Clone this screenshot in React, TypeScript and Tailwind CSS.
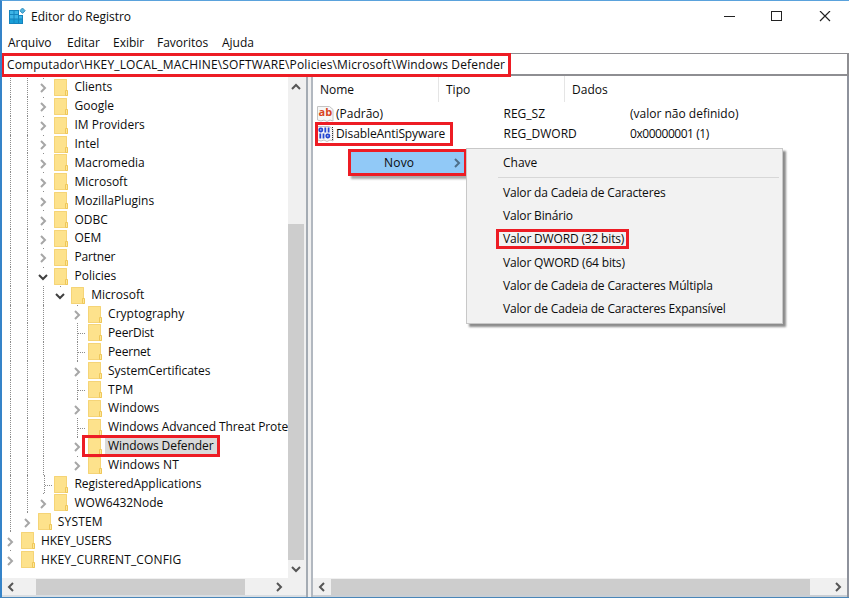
import { ReactNode } from 'react';

type TreeRow = {
  // one character per column: | guide, > collapsed, v expanded, L leaf, space empty
  guides: string;
  name: string;
  selected?: boolean;
  tracking?: string;
};

const rows: TreeRow[] = [
  { guides: '||>', name: 'Clients' },
  { guides: '||>', name: 'Google' },
  { guides: '||>', name: 'IM Providers' },
  { guides: '||>', name: 'Intel' },
  { guides: '||>', name: 'Macromedia' },
  { guides: '||>', name: 'Microsoft' },
  { guides: '||>', name: 'MozillaPlugins' },
  { guides: '||>', name: 'ODBC' },
  { guides: '||>', name: 'OEM' },
  { guides: '||>', name: 'Partner', tracking: 'tracking-[-0.2px]' },
  { guides: '||v', name: 'Policies' },
  { guides: '|||v', name: 'Microsoft' },
  { guides: '||| >', name: 'Cryptography' },
  { guides: '||| L', name: 'PeerDist', tracking: 'tracking-[-0.2px]' },
  { guides: '||| L', name: 'Peernet', tracking: 'tracking-[-0.2px]' },
  { guides: '||| >', name: 'SystemCertificates', tracking: 'tracking-[-0.05px]' },
  { guides: '||| L', name: 'TPM', tracking: 'tracking-[0.3px]' },
  { guides: '||| >', name: 'Windows' },
  { guides: '||| L', name: 'Windows Advanced Threat Protection', tracking: 'tracking-[-0.07px]' },
  { guides: '||| >', name: 'Windows Defender', selected: true, tracking: 'tracking-[-0.08px]' },
  { guides: '||| >', name: 'Windows NT', tracking: 'tracking-[0.1px]' },
  { guides: '||L', name: 'RegisteredApplications', tracking: 'tracking-[-0.04px]' },
  { guides: '||>', name: 'WOW6432Node', tracking: 'tracking-[-0.05px]' },
  { guides: '|>', name: 'SYSTEM', tracking: 'tracking-[0.2px]' },
  { guides: '>', name: 'HKEY_USERS' },
  { guides: '>', name: 'HKEY_CURRENT_CONFIG', tracking: 'tracking-[0.15px]' },
];

const menus = [
  { label: 'Arquivo', width: 'w-[59px]' },
  { label: 'Editar', width: 'w-[46px]' },
  { label: 'Exibir', width: 'w-[44px]' },
  { label: 'Favoritos', width: 'w-[65px]' },
  { label: 'Ajuda', width: 'w-[50px]' },
];

const newItems = [
  'Valor da Cadeia de Caracteres',
  'Valor Binário',
  'Valor DWORD (32 bits)',
  'Valor QWORD (64 bits)',
  'Valor de Cadeia de Caracteres Múltipla',
  'Valor de Cadeia de Caracteres Expansível',
];

function Chevron({ dir, className = 'text-[#555]' }: { dir: 'up' | 'down' | 'left' | 'right'; className?: string }) {
  const points = {
    up: '1,7 5,3 9,7',
    down: '1,3 5,7 9,3',
    left: '7,1 3,5 7,9',
    right: '3,1 7,5 3,9',
  };
  return (
    <svg viewBox="0 0 10 10" className={`h-[10px] w-[10px] shrink-0 ${className}`}>
      <polyline points={points[dir]} fill="none" stroke="currentColor" strokeWidth="2" />
    </svg>
  );
}

function Folder() {
  return (
    <svg viewBox="0 0 14 17" className="ml-[2.1px] h-[17px] w-[14px] shrink-0">
      <path d="M0 0h13v11l1 2v4H0z" fill="#fde28c" />
      <path d="M.5.5h12v11M.5.5v16h11" fill="none" stroke="#f5d477" />
      <path d="M11.500 16.500v-5h2v5z" fill="#fde79a" stroke="#efc759" />
    </svg>
  );
}

function Guide({ kind }: { kind: string }) {
  if (kind === ' ') return <span className="w-[16.8px] shrink-0" />;
  if (kind === '|') {
    return (
      <span className="flex w-[16.8px] shrink-0 justify-center self-stretch">
        <span className="w-px border-l border-dotted border-[#8c8c8c]" />
      </span>
    );
  }
  if (kind === 'L') {
    return (
      <span className="flex w-[16.8px] shrink-0 items-center self-stretch">
        <span className="ml-2 h-full border-l border-dotted border-[#8c8c8c]" />
        <span className="mt-[2px] w-[7px] border-t border-dotted border-[#8c8c8c]" />
      </span>
    );
  }
  return (
    <span className="flex w-[16.8px] shrink-0 flex-col items-center self-stretch">
      <span className="h-px w-px bg-[#8c8c8c]" />
      <span className="mr-px mt-[4.500px] flex">
        {kind === 'v' ? <Chevron dir="down" className="text-[#404040]" /> : <Chevron dir="right" className="text-[#a6a6a6]" />}
      </span>
    </span>
  );
}

function KeyRow({ row }: { row: TreeRow }) {
  return (
    <div className="flex h-[18.9px] items-center whitespace-nowrap">
      {row.guides.split('').map((kind, i) => (
        <Guide key={i} kind={kind} />
      ))}
      <Folder />
      <span className={`ml-[3px] pl-[3px] pr-1 leading-[18px] ${row.tracking ?? ''} ${row.selected ? 'bg-[#d9d9d9]' : ''}`}>{row.name}</span>
    </div>
  );
}

function HScroll({ children }: { children: ReactNode }) {
  return (
    <div className="flex h-[17px] shrink-0 items-center bg-[#f0f0f0]">
      {children}
    </div>
  );
}

function RegeditIcon() {
  return (
    <svg viewBox="0 0 17 17" className="h-[17px] w-[17px]">
      <path d="M0 2h10v5h4v9H0z" fill="#1583bd" />
      <path d="M1 3h3.500v3H1zM5.500 3H9v3H5.500zM1 7h3.500v3.500H1zM5.500 7H9v3.500H5.500zM10 8h3v2.500h-3z" fill="#3cb4e6" />
      <path d="M1 11.500h3.500V15H1zM5.500 11.500H9V15H5.500zM10 11.500h3V15h-3z" fill="#1a9fd8" />
      <path d="M13.500 0 16.200 2.700 13.500 5.400 10.800 2.700z" fill="#55b4de" stroke="#1b7fb5" strokeWidth=".8" />
    </svg>
  );
}

function ValueIcon({ binary }: { binary?: boolean }) {
  return (
    <svg viewBox="0 0 17 16" className="h-4 w-[17px] shrink-0 overflow-visible">
      <path d="M.5.5h12l3.500 3v11.500l-3-1-3 1.500-3-1.500-3 1-3.500-1z" fill="#f7f7f7" stroke="#c4c4c4" />
      {binary ? (
        <g fill="none" stroke="#2546d2" strokeWidth="1.800">
          <rect x="2.300" y="2.300" width="3" height="3.200" rx="1.200" />
          <path d="M8.300 1.400v5M11.600 1.400v5M3.300 7.400v5M6.500 7.400v5" />
          <rect x="9.300" y="8.300" width="3" height="3.200" rx="1.200" />
          <path d="M15.500 1v14" stroke="#333" strokeWidth="1" strokeDasharray="1 1" />
        </g>
      ) : (
        <text x="1.500" y="10" fontSize="11" fontWeight="700" fill="#d9431e" className="font-['Open_Sans',sans-serif]">ab</text>
      )}
    </svg>
  );
}

export default function App() {
  return (
    <div className="relative flex h-[598px] w-[849px] flex-col overflow-hidden border-b border-l-2 border-t border-b-[#4a86b8] border-l-[#3583c8] border-t-[#5aa2dc] bg-white font-['Open_Sans','Noto_Sans',sans-serif] text-[12px] leading-4 text-[#0c0c0c]">
      <header className="flex h-[31px] shrink-0 items-center pl-[7px]">
        <RegeditIcon />
        <span className="ml-[5px]">Editor do Registro</span>
        <div className="ml-auto flex items-center pr-[18px] text-[#222]">
          <svg viewBox="0 0 108 12" className="h-3 w-[108px]" fill="none" stroke="currentColor">
            <path d="M1 5.500h11" />
            <rect x="48.500" y=".5" width="10" height="9" />
            <path d="m97 0 10 10M107 0 97 10" strokeWidth="1.200" />
          </svg>
        </div>
      </header>

      <nav className="flex h-[21px] shrink-0 items-center pl-[6px]">
        {menus.map((menu) => (
          <span key={menu.label} className={`${menu.width} whitespace-nowrap`}>{menu.label}</span>
        ))}
      </nav>

      <div className="flex h-[23px] shrink-0 items-center border-b-2 border-r-2 border-t border-[#8e8e92] pl-[5px] pt-[2px]">
        <span className="whitespace-nowrap tracking-[0.153px]">Computador\HKEY_LOCAL_MACHINE\SOFTWARE\Policies\Microsoft\Windows Defender</span>
      </div>

      <main className="flex min-h-0 flex-1">
        <section className="flex w-[304px] shrink-0 flex-col">
          <div className="flex min-h-0 flex-1">
            <div className="w-[286px] overflow-hidden pt-[1.900px]">
              {rows.map((row, i) => (
                <KeyRow key={i} row={row} />
              ))}
            </div>
            <div className="flex w-[18px] flex-col items-center bg-[#f0f0f0] pr-[2px]">
              <div className="flex h-[148px] items-start pt-[6px]">
                <Chevron dir="up" />
              </div>
              <div className="h-[336px] w-4 bg-[#cdcdcd]" />
              <div className="pt-[4px]">
                <Chevron dir="down" />
              </div>
            </div>
          </div>
          <HScroll>
            <span className="flex w-[34px] pl-[4px]"><Chevron dir="left" /></span>
            <span className="h-4 w-[209px] bg-[#cdcdcd]" />
            <span className="ml-[29px]"><Chevron dir="right" /></span>
          </HScroll>
          <div className="h-[2px] bg-[#d8dde2]" />
        </section>

        <div className="flex w-[7px] shrink-0 border-x-2 border-l-[#a4abb3] border-r-[#b2b8c0] bg-[#f0f0f0]" />

        <section className="flex min-w-0 flex-1 flex-col border-r-2 border-[#8e929c]">
          <div className="flex h-[26px] shrink-0 items-center pl-[7px]">
            <span className="flex h-full w-[119px] items-center border-r border-[#e5e5e5] pt-[2px]">Nome</span>
            <span className="flex h-full w-[126px] items-center border-r border-[#e5e5e5] pl-[7px] pt-[2px]">Tipo</span>
            <span className="pl-[7px] pt-[2px]">Dados</span>
          </div>
          <div className="flex-1 pl-[4px] pt-[2px]">
            <div className="flex h-5 items-center whitespace-nowrap">
              <ValueIcon />
              <span className="w-[169.500px] pl-[2px]">(Padrão)</span>
              <span className="w-[126.500px]">REG_SZ</span>
              <span>(valor não definido)</span>
            </div>
            <div className="flex h-5 items-center whitespace-nowrap">
              <ValueIcon binary />
              <span className="w-[169.500px] pl-[2px] tracking-[-0.1px]">DisableAntiSpyware</span>
              <span className="w-[126.500px]">REG_DWORD</span>
              <span className="tracking-[-0.45px]">0x00000001 (1)</span>
            </div>
          </div>
          <HScroll>
            <span className="flex w-[18px] pl-[4px]"><Chevron dir="left" /></span>
            <span className="h-4 w-[479px] bg-[#cdcdcd]" />
            <span className="ml-[23px]"><Chevron dir="right" /></span>
          </HScroll>
          <div className="h-[2px] bg-[#c9ced4]" />
        </section>
      </main>

      {/* context menu */}
      <div className="absolute left-[346px] top-[148px] flex h-[27px] w-[119px] items-center border-[3px] border-[#ed1c24] bg-[#91c9f7] shadow-[3px_3px_2px_#aaa]">
        <span className="ml-[33px] tracking-[0.2px]">Novo</span>
        <span className="ml-auto mr-0.5"><Chevron dir="right" className="text-[#4d6f8a]" /></span>
      </div>
      <div className="absolute left-[464px] top-[147px] h-[176px] w-[317px] border border-[#c8c8c8] bg-[#f2f2f2] pl-[31px] pr-[3px] pt-[2px] shadow-[3px_3px_2px_#8c8c8c]">
        <div className="flex h-[23px] items-center pl-[5px]">Chave</div>
        <div className="mb-[3.600px] mt-[3px] h-px bg-[#d7d7d7]" />
        {newItems.map((item) => (
          <div key={item} className="flex h-[23.15px] items-center whitespace-nowrap pl-[5px] tracking-[-0.17px]">{item}</div>
        ))}
      </div>

      {/* highlights */}
      <div className="absolute -left-[1px] top-[52px] h-[24px] w-[510px] border-[3px] border-[#ed1c24]" />
      <div className="absolute left-[313px] top-[121px] h-[24px] w-[138px] border-[3px] border-[#ed1c24]" />
      <div className="absolute left-[494px] top-[228px] h-[20px] w-[133px] border-[3px] border-[#ed1c24]" />
      <div className="absolute left-[80px] top-[434px] h-[22px] w-[138px] border-[3px] border-[#ed1c24]" />
    </div>
  );
}
